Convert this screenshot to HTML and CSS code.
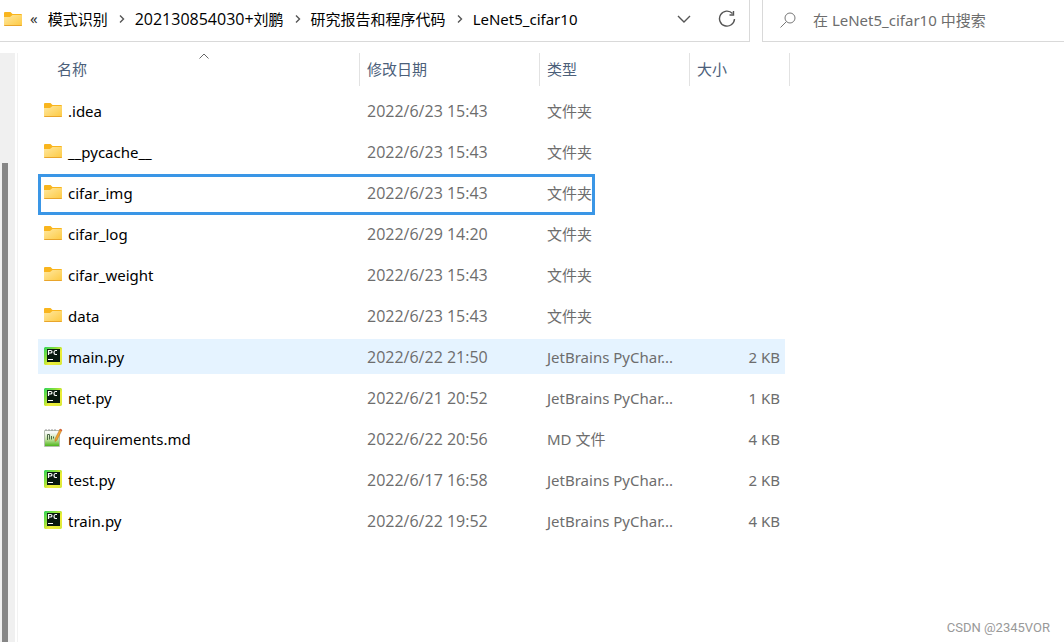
FILE: index.html
```html
<!DOCTYPE html>
<html lang="zh-CN">
<head>
    <meta charset="UTF-8">
    <meta name="viewport" content="width=device-width, initial-scale=1.0">
    <title>LeNet5_cifar10</title>
    <link rel="stylesheet" href="styles.css">
</head>
<body>

    <!-- icons used by the file list -->
    <svg class="sprite" aria-hidden="true">
        <defs>
            <linearGradient id="folder-fill" x1="0" y1="0" x2="1" y2="1">
                <stop offset="0" stop-color="#ffe8a0"/>
                <stop offset="1" stop-color="#fdc941"/>
            </linearGradient>
            <linearGradient id="pc-fill" x1="0" y1="0" x2="1" y2="1">
                <stop offset="0" stop-color="#2fd45a"/>
                <stop offset="0.35" stop-color="#8be03c"/>
                <stop offset="0.6" stop-color="#f0ee3a"/>
                <stop offset="1" stop-color="#d8e83a"/>
            </linearGradient>
            <linearGradient id="md-fill" x1="0" y1="0" x2="0" y2="1">
                <stop offset="0" stop-color="#f4f6f2"/>
                <stop offset="0.5" stop-color="#c2e39e"/>
                <stop offset="1" stop-color="#4db51c"/>
            </linearGradient>
        </defs>
        <symbol id="folder" viewBox="0 0 18 14">
            <path d="M0 1Q0 0 1 0H6.500L8.500 2H17Q18 2 18 3V6H0Z" fill="#f9b51d"/>
            <path d="M0 5H6L8.500 3H17.500Q18 3 18 4V13Q18 14 17 14H1Q0 14 0 13Z" fill="url(#folder-fill)"/>
            <path d="M0 13H18Q18 14 17 14H1Q0 14 0 13Z" fill="#e9a52b"/>
        </symbol>
        <symbol id="pycharm" viewBox="0 0 18 18">
            <path d="M0 1L1 0H17L18 1V17L17 18H1L0 17Z" fill="url(#pc-fill)"/>
            <rect x="3" y="2" width="13" height="13" fill="#07180e"/>
            <path d="M4.500 8V3.500H6.500Q8 3.500 8 4.700Q8 6 6.500 6H4.500M13 3.500H11.500Q10 3.500 10 5.500Q10 7.500 11.500 7.500H13" fill="none" stroke="#fff" stroke-width="1.200"/>
            <path d="M4 12.500H9" stroke="#fff"/>
        </symbol>
        <symbol id="markdown" viewBox="0 0 20 20">
            <path d="M1.500 2.500H16.500V18.500H1.500Z" fill="#f7f9f5" stroke="#b5bfb0"/>
            <path d="M2 5H16V18H2Z" fill="url(#md-fill)"/>
            <path d="M4.500 12V6.500H6.500V11.500M8.500 8V11.500M10.500 8.500V10.500" fill="none" stroke="#4b6a45"/>
            <path d="M3 1V3M6 1V3M9 1V3M12 1V3" stroke="#999"/>
            <path d="M17 1L12 11L12 13.500L14 12L19 2Z" fill="#f3a62d" stroke="#a96522" stroke-width="0.500"/>
            <path d="M17 1L19 2L18.500 3L16.500 2Z" fill="#d84a35"/>
        </symbol>
    </svg>

    <header class="toolbar">
        <nav class="address">
            <svg class="icon-folder" aria-hidden="true"><use href="#folder"/></svg>
            <span class="more">«</span>
            <a class="crumb" href="#">模式识别</a>
            <svg class="sep" viewBox="0 0 6 8"><path d="M1 0.500L4.500 4L1 7.500"/></svg>
            <a class="crumb" href="#"><span class="latin">202130854030+</span>刘鹏</a>
            <svg class="sep" viewBox="0 0 6 8"><path d="M1 0.500L4.500 4L1 7.500"/></svg>
            <a class="crumb" href="#">研究报告和程序代码</a>
            <svg class="sep" viewBox="0 0 6 8"><path d="M1 0.500L4.500 4L1 7.500"/></svg>
            <a class="crumb" href="#">LeNet5_cifar10</a>
            <span class="tools">
                <button class="tool" aria-label="历史记录">
                    <svg width="14" height="8" viewBox="0 0 14 8"><path d="M1 1L7 7L13 1"/></svg>
                </button>
                <button class="tool" aria-label="刷新">
                    <svg width="18" height="18" viewBox="0 0 18 18"><path d="M14.500 3.500A7.500 7.500 0 1 0 16.500 9M15.500 1V5H11.500"/></svg>
                </button>
            </span>
        </nav>
        <label class="search">
            <svg width="16" height="16" viewBox="0 0 16 16"><circle cx="10" cy="6" r="5"/><path d="M6.500 9.500L0.500 15.500"/></svg>
            <input type="text" placeholder="在 LeNet5_cifar10 中搜索" aria-label="搜索">
        </label>
    </header>

    <main class="content">
        <div class="scroll"><div class="thumb"></div></div>
        <div class="list">
            <table class="files">
                <thead>
                    <tr>
                        <th class="name">
                            <button class="head first">名称</button>
                            <svg class="sort" width="10" height="6" viewBox="0 0 10 6"><path d="M0.500 5.500L5 1L9.500 5.500"/></svg>
                        </th>
                        <th class="date"><button class="head">修改日期</button></th>
                        <th class="type"><button class="head">类型</button></th>
                        <th class="size"><button class="head">大小</button></th>
                    </tr>
                </thead>
                <tbody>
                    <tr>
                        <td><span class="file"><svg class="icon-folder"><use href="#folder"/></svg>.idea</span></td>
                        <td class="latin">2022/6/23 15:43</td><td>文件夹</td><td></td>
                    </tr>
                    <tr>
                        <td><span class="file"><svg class="icon-folder"><use href="#folder"/></svg>__pycache__</span></td>
                        <td class="latin">2022/6/23 15:43</td><td>文件夹</td><td></td>
                    </tr>
                    <tr>
                        <td><span class="file"><svg class="icon-folder"><use href="#folder"/></svg>cifar_img</span><span class="frame"></span></td>
                        <td class="latin">2022/6/23 15:43</td><td>文件夹</td><td></td>
                    </tr>
                    <tr>
                        <td><span class="file"><svg class="icon-folder"><use href="#folder"/></svg>cifar_log</span></td>
                        <td class="latin">2022/6/29 14:20</td><td>文件夹</td><td></td>
                    </tr>
                    <tr>
                        <td><span class="file"><svg class="icon-folder"><use href="#folder"/></svg>cifar_weight</span></td>
                        <td class="latin">2022/6/23 15:43</td><td>文件夹</td><td></td>
                    </tr>
                    <tr>
                        <td><span class="file"><svg class="icon-folder"><use href="#folder"/></svg>data</span></td>
                        <td class="latin">2022/6/23 15:43</td><td>文件夹</td><td></td>
                    </tr>
                    <tr class="hover">
                        <td><span class="file"><svg class="icon-file"><use href="#pycharm"/></svg>main.py</span></td>
                        <td class="latin">2022/6/22 21:50</td><td>JetBrains PyChar...</td><td>2 KB</td>
                    </tr>
                    <tr>
                        <td><span class="file"><svg class="icon-file"><use href="#pycharm"/></svg>net.py</span></td>
                        <td class="latin">2022/6/21 20:52</td><td>JetBrains PyChar...</td><td>1 KB</td>
                    </tr>
                    <tr>
                        <td><span class="file"><svg class="icon-md"><use href="#markdown"/></svg>requirements.md</span></td>
                        <td class="latin">2022/6/22 20:56</td><td>MD 文件</td><td>4 KB</td>
                    </tr>
                    <tr>
                        <td><span class="file"><svg class="icon-file"><use href="#pycharm"/></svg>test.py</span></td>
                        <td class="latin">2022/6/17 16:58</td><td>JetBrains PyChar...</td><td>2 KB</td>
                    </tr>
                    <tr>
                        <td><span class="file"><svg class="icon-file"><use href="#pycharm"/></svg>train.py</span></td>
                        <td class="latin">2022/6/22 19:52</td><td>JetBrains PyChar...</td><td>4 KB</td>
                    </tr>
                </tbody>
            </table>
        </div>
    </main>

    <div class="watermark">CSDN @2345VOR</div>

</body>
</html>
```
FILE: styles.css
```css
* {
    box-sizing: border-box;
}
body {
    margin: 0;
    min-height: 100vh;
    display: flex;
    flex-direction: column;
    background: #fff;
    color: #000;
    font-family: "Noto Sans", "Noto Sans CJK SC", sans-serif;
    font-size: 15px;
    line-height: 20px;
}
button {
    border: 0;
    padding: 0;
    background: none;
    font: inherit;
}
svg {
    flex: none;
    fill: none;
}
.sprite {
    position: absolute;
    width: 0;
    height: 0;
}
.latin {
    font-family: "Open Sans", sans-serif;
    font-size: 16px;
}

/* address bar and search */
.toolbar {
    display: flex;
    gap: 12px;
    height: 42px;
}
.address {
    flex: 1;
    display: flex;
    align-items: center;
    padding: 0 13px 3px 4px;
    border-right: 1px solid #d9d9d9;
    border-bottom: 1px solid #d9d9d9;
}
.more {
    margin: 0 10px 2px 8px;
    color: #333;
}
.crumb {
    color: #000;
    text-decoration: none;
    white-space: nowrap;
}
.sep {
    width: 6px;
    height: 8px;
    margin: 0 10px 0 11px;
    stroke: #555;
    stroke-width: 1.4;
}
.tools {
    display: flex;
    gap: 27px;
    margin-left: auto;
}
.tool {
    display: flex;
    align-items: center;
    stroke: #555;
    stroke-width: 1.4;
}
.search {
    display: flex;
    align-items: center;
    gap: 17px;
    width: 302px;
    padding: 0 0 2px 17px;
    border-left: 1px solid #d9d9d9;
    border-bottom: 1px solid #d9d9d9;
}
.search svg {
    stroke: #777;
}
.search input {
    flex: 1;
    min-width: 0;
    border: 0;
    padding: 0;
    outline: 0;
    background: none;
    font: inherit;
}
.search input::placeholder {
    color: #6d6d6d;
}

/* file list */
.content {
    flex: 1;
    display: flex;
    padding-top: 11px;
}
.scroll {
    display: flex;
    width: 15px;
    padding: 110px 0 0 2px;
    margin-right: 2px;
    background: #f0f0f0;
}
.thumb {
    width: 6px;
    background: #868686;
}
.list {
    flex: 1;
    padding-left: 20px;
    border-left: 1px solid #f2f2f2;
}
.files {
    width: 752px;
    table-layout: fixed;
    border-collapse: separate;
    border-spacing: 0;
}
.files th {
    position: relative;
    height: 37px;
    padding: 0;
    vertical-align: top;
    font-weight: normal;
}
.name {
    width: 322px;
}
.date {
    width: 180px;
}
.type {
    width: 150px;
}
.size {
    width: 100px;
}
.head {
    display: block;
    width: 100%;
    height: 33px;
    padding: 0 0 2px 7px;
    border-right: 1px solid #e2e2e2;
    color: #4c607a;
    text-align: left;
}
.first {
    padding-left: 19px;
}
.sort {
    position: absolute;
    top: 0;
    left: 50%;
    stroke: #666;
}
.files td {
    height: 41px;
    padding: 0 0 0 7px;
    border: 3px solid transparent;
    border-width: 3px 0;
    background-clip: padding-box;
    color: #6d6d6d;
    white-space: nowrap;
}
.files td:first-child {
    position: relative;
    padding-left: 6px;
    color: #000;
}
.files td:last-child {
    padding-right: 5px;
    border-right-width: 5px;
    text-align: right;
}
.file {
    display: flex;
    align-items: center;
    gap: 6px;
}
.file svg {
    margin-bottom: 2px;
}
.hover td {
    background-color: #e5f3ff;
}
.icon-folder {
    width: 18px;
    height: 14px;
}
.icon-file {
    width: 18px;
    height: 18px;
}
.icon-md {
    width: 20px;
    height: 20px;
    margin: 0 -1px;
}
.frame {
    position: absolute;
    top: -1px;
    left: 0;
    width: 557px;
    height: 41px;
    border: 3px solid #3a96e6;
}

.watermark {
    position: absolute;
    right: 14px;
    bottom: 5px;
    color: #999;
    font: 13px/18px Roboto, sans-serif;
}
```
